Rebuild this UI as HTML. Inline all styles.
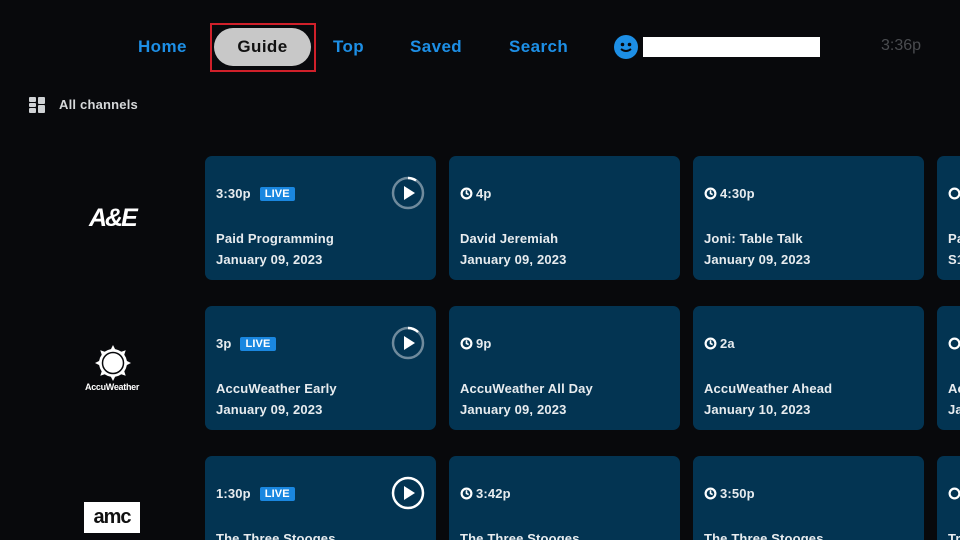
<!DOCTYPE html>
<html style="width:960px;height:540px;overflow:hidden"><head><meta charset="utf-8"><style>
*{margin:0;padding:0;box-sizing:border-box}
body{width:960px;height:540px;overflow:hidden;background:#08090c;font-family:"Liberation Sans",sans-serif;position:relative;color:#e8ecef}
.a{position:absolute;white-space:nowrap}
.nav{font-size:17px;font-weight:bold;color:#1d8fe6;top:37px;letter-spacing:0.4px}
.card{position:absolute;width:231px;height:124px;background:#033452;border-radius:7px;overflow:hidden;letter-spacing:0.15px}
.r3{height:84px;border-radius:7px 7px 0 0}
.t{position:absolute;left:11px;top:30px;font-size:13px;font-weight:bold;display:flex;align-items:center;gap:3px}
.live{background:#1a87e0;color:#fff;font-size:11px;padding:1px 5px;border-radius:2px;margin-left:6px;font-weight:bold}
.n{position:absolute;left:11px;top:75px;font-size:13px;font-weight:bold}
.d{position:absolute;left:11px;top:96px;font-size:13px;font-weight:bold}
.p{position:absolute;left:186px;top:20px}
</style></head><body>
<div class="a nav" style="left:138px">Home</div>
<div class="a" style="left:210px;top:23px;width:106px;height:49px;border:2px solid #d0202a"></div>
<div class="a" style="left:214px;top:28px;width:97px;height:38px;border-radius:19px;background:#c8c8c8;color:#111;font-size:17px;font-weight:bold;text-align:center;line-height:38px;letter-spacing:0.4px">Guide</div>
<div class="a nav" style="left:333px">Top</div>
<div class="a nav" style="left:410px">Saved</div>
<div class="a nav" style="left:509px">Search</div>
<svg class="a" style="left:614px;top:35px" width="24" height="24" viewBox="0 0 24 24"><circle cx="12" cy="12" r="12" fill="#1d8fe6"/><circle cx="8.5" cy="9.5" r="1.8" fill="#08090c"/><circle cx="15.5" cy="9.5" r="1.8" fill="#08090c"/><path d="M7 14q5 4 10 0" stroke="#08090c" stroke-width="2" fill="none"/></svg>
<div class="a" style="left:643px;top:37px;width:177px;height:20px;background:#fff"></div>
<div class="a" style="left:881px;top:37px;font-size:16px;color:#4a4c50">3:36p</div>
<svg class="a" style="left:29px;top:97px" width="16" height="16" viewBox="0 0 16 16" fill="#cfd2d5"><rect x="0" y="0" width="7" height="5" rx="1"/><rect x="0" y="6" width="7" height="4" rx="1"/><rect x="0" y="11" width="7" height="5" rx="1"/><rect x="9" y="0" width="7" height="7" rx="1"/><rect x="9" y="8" width="7" height="8" rx="1"/></svg>
<div class="a" style="left:59px;top:97px;font-size:13px;font-weight:bold;color:#d6d8da;letter-spacing:0.2px">All channels</div>

<div class="a" style="left:89px;top:204px;font-size:25px;font-weight:900;font-style:italic;color:#fff;letter-spacing:-2px">A&amp;E</div>
<svg class="a" style="left:95px;top:345px" width="36" height="36" viewBox="0 0 36 36"><g fill="#fff"><circle cx="18" cy="18" r="14"/><g><polygon points="18,0 21,6 15,6"/><polygon points="18,36 21,30 15,30"/><polygon points="0,18 6,15 6,21"/><polygon points="36,18 30,15 30,21"/></g><g transform="rotate(45 18 18)"><polygon points="18,0 21,6 15,6"/><polygon points="18,36 21,30 15,30"/><polygon points="0,18 6,15 6,21"/><polygon points="36,18 30,15 30,21"/></g></g><circle cx="18" cy="18" r="10.5" fill="none" stroke="#08090c" stroke-width="1.5"/></svg>
<div class="a" style="left:85px;top:382px;font-size:9px;font-weight:bold;color:#fff;letter-spacing:-0.3px">AccuWeather</div>
<div class="a" style="left:84px;top:502px;width:56px;height:31px;background:#fff;color:#111;font-size:20px;font-weight:bold;text-align:center;line-height:31px;letter-spacing:-1px">amc</div>

<!-- row1 -->
<div class="card" style="left:205px;top:156px"><div class="t">3:30p<span class="live">LIVE</span></div><svg class="p" width="34" height="34" viewBox="0 0 34 34"><circle cx="17" cy="17" r="15" fill="none" stroke="#6f8a9c" stroke-width="2.5"/><path d="M17 2a15 15 0 0 1 8 2.5" stroke="#fff" stroke-width="2.5" fill="none"/><path d="M13 10l11 7-11 7z" fill="#fff"/></svg><div class="n">Paid Programming</div><div class="d">January 09, 2023</div></div>
<div class="card" style="left:449px;top:156px"><div class="t"><svg width="13" height="13" viewBox="0 0 12 12"><circle cx="6" cy="6" r="4.5" fill="none" stroke="#fff" stroke-width="2"/><path d="M6 3v3l2 1" stroke="#fff" stroke-width="1.5" fill="none"/></svg>4p</div><div class="n">David Jeremiah</div><div class="d">January 09, 2023</div></div>
<div class="card" style="left:693px;top:156px"><div class="t"><svg width="13" height="13" viewBox="0 0 12 12"><circle cx="6" cy="6" r="4.5" fill="none" stroke="#fff" stroke-width="2"/><path d="M6 3v3l2 1" stroke="#fff" stroke-width="1.5" fill="none"/></svg>4:30p</div><div class="n">Joni: Table Talk</div><div class="d">January 09, 2023</div></div>
<div class="card" style="left:937px;top:156px"><div class="t"><svg width="13" height="13" viewBox="0 0 12 12"><circle cx="6" cy="6" r="4.5" fill="none" stroke="#fff" stroke-width="2"/></svg>5p</div><div class="n">Paid</div><div class="d">S1</div></div>
<!-- row2 -->
<div class="card" style="left:205px;top:306px"><div class="t">3p<span class="live">LIVE</span></div><svg class="p" width="34" height="34" viewBox="0 0 34 34"><circle cx="17" cy="17" r="15" fill="none" stroke="#6f8a9c" stroke-width="2.5"/><path d="M17 2a15 15 0 0 1 10 4" stroke="#fff" stroke-width="2.5" fill="none"/><path d="M13 10l11 7-11 7z" fill="#fff"/></svg><div class="n">AccuWeather Early</div><div class="d">January 09, 2023</div></div>
<div class="card" style="left:449px;top:306px"><div class="t"><svg width="13" height="13" viewBox="0 0 12 12"><circle cx="6" cy="6" r="4.5" fill="none" stroke="#fff" stroke-width="2"/><path d="M6 3v3l2 1" stroke="#fff" stroke-width="1.5" fill="none"/></svg>9p</div><div class="n">AccuWeather All Day</div><div class="d">January 09, 2023</div></div>
<div class="card" style="left:693px;top:306px"><div class="t"><svg width="13" height="13" viewBox="0 0 12 12"><circle cx="6" cy="6" r="4.5" fill="none" stroke="#fff" stroke-width="2"/><path d="M6 3v3l2 1" stroke="#fff" stroke-width="1.5" fill="none"/></svg>2a</div><div class="n">AccuWeather Ahead</div><div class="d">January 10, 2023</div></div>
<div class="card" style="left:937px;top:306px"><div class="t"><svg width="13" height="13" viewBox="0 0 12 12"><circle cx="6" cy="6" r="4.5" fill="none" stroke="#fff" stroke-width="2"/></svg>3a</div><div class="n">Ac</div><div class="d">Ja</div></div>
<!-- row3 -->
<div class="card r3" style="left:205px;top:456px"><div class="t">1:30p<span class="live">LIVE</span></div><svg class="p" width="34" height="34" viewBox="0 0 34 34"><circle cx="17" cy="17" r="15" fill="none" stroke="#fff" stroke-width="2.5"/><path d="M13 10l11 7-11 7z" fill="#fff"/></svg><div class="n">The Three Stooges</div></div>
<div class="card r3" style="left:449px;top:456px"><div class="t"><svg width="13" height="13" viewBox="0 0 12 12"><circle cx="6" cy="6" r="4.5" fill="none" stroke="#fff" stroke-width="2"/><path d="M6 3v3l2 1" stroke="#fff" stroke-width="1.5" fill="none"/></svg>3:42p</div><div class="n">The Three Stooges</div></div>
<div class="card r3" style="left:693px;top:456px"><div class="t"><svg width="13" height="13" viewBox="0 0 12 12"><circle cx="6" cy="6" r="4.5" fill="none" stroke="#fff" stroke-width="2"/><path d="M6 3v3l2 1" stroke="#fff" stroke-width="1.5" fill="none"/></svg>3:50p</div><div class="n">The Three Stooges</div></div>
<div class="card r3" style="left:937px;top:456px"><div class="t"><svg width="13" height="13" viewBox="0 0 12 12"><circle cx="6" cy="6" r="4.5" fill="none" stroke="#fff" stroke-width="2"/></svg>4p</div><div class="n">Tr</div></div>
</body></html>
